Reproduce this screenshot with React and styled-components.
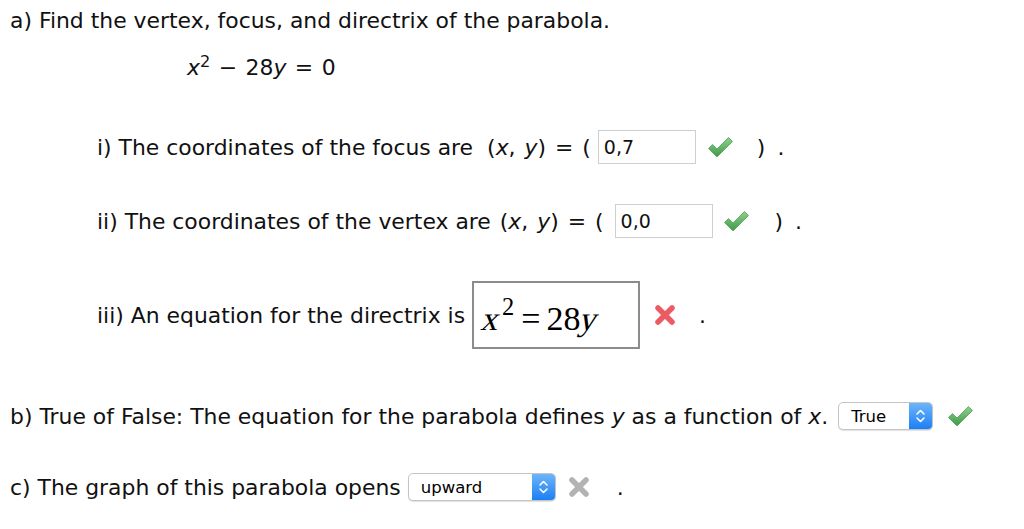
import styled, { createGlobalStyle } from 'styled-components';

const GlobalStyle = createGlobalStyle`
  html, body {
    margin: 0;
    padding: 0;
    background: #ffffff;
  }
  body {
    font-family: "DejaVu Sans", Verdana, sans-serif;
    color: #111111;
  }
`

const Page = styled.div`
  display: flex;
  flex-direction: column;
  padding-left: 10px;
  width: 1014px;
  height: 529px;
  font-size: 21.9px;
`

const Row = styled.div`
  display: flex;
  align-items: center;
  height: ${p => p.h}px;
  margin-top: ${p => p.top}px;
  padding-left: ${p => p.indent || 0}px;
  white-space: pre;
`

const Text = styled.span`
  margin-left: ${p => p.gap || 0}px;
`

const Coord = styled.span`
  margin-left: ${p => p.gap || 0}px;
  word-spacing: 2px;
`

const Equation = styled.span`
  word-spacing: 1.5px;
`

const Var = styled.i`
  font-style: italic;
`

const Sup = styled.sup`
  font-size: 0.74em;
  vertical-align: 0.5em;
  line-height: 0;
`

const AnswerInput = styled.div`
  display: flex;
  align-items: center;
  box-sizing: border-box;
  width: 98px;
  height: 34px;
  margin-left: ${p => p.gap}px;
  padding-left: 5px;
  border: 1px solid #cfcfcf;
  background: #fff;
  font-size: 19px;
`

const MathBox = styled.div`
  display: flex;
  align-items: center;
  box-sizing: border-box;
  width: 168px;
  height: 68px;
  margin-left: 7px;
  padding: 8px 0 0 9px;
  border: 2px solid #8c8c8c;
  font-family: "Liberation Serif", "Times New Roman", serif;
  font-size: 34px;
  color: #000;
`

const MathLine = styled.span`
  display: inline-block;
  line-height: 1;
`

const MathVar = styled.span`
  display: inline-block;
  font-style: normal;
  transform: skewX(-15deg);
`

const MathSup = styled.sup`
  font-size: 0.72em;
  vertical-align: 0.6em;
  line-height: 0;
  margin-left: 2px;
`

const MathOp = styled.span`
  margin: 0 6px 0 7px;
`

const Select = styled.div`
  display: flex;
  align-items: stretch;
  box-sizing: border-box;
  width: ${p => p.w}px;
  height: 28px;
  margin-left: ${p => p.gap}px;
  border: 1px solid #c4c4c4;
  border-radius: 5px;
  overflow: hidden;
  background: #fff;
  box-shadow: 0 1px 1px rgba(0, 0, 0, 0.12);
  font-size: 16.5px;
  color: #000;
`

const SelectLabel = styled.span`
  flex: 1;
  display: flex;
  align-items: center;
  padding-left: 12px;
`

const SelectButton = styled.span`
  display: flex;
  align-items: center;
  justify-content: center;
  width: 23px;
  background: linear-gradient(#6db5fb, #1b7ff5);
`

const Mark = styled.span`
  display: flex;
  align-items: center;
  margin-left: ${p => p.gap}px;
`

function Check() {
  return (
    <svg width="27" height="22" viewBox="0 0 27 22">
      <defs>
        <linearGradient id="chk" x1="0" y1="0" x2="0" y2="1">
          <stop offset="0" stopColor="#8fd08d" />
          <stop offset="1" stopColor="#3f9a48" />
        </linearGradient>
      </defs>
      <path
        d="M1.5 12.5 L5.5 8.5 L10 13 L21.5 1.5 L25.5 5.5 L10.5 20.5 Q10 21 9.5 20.5 Z"
        fill="url(#chk)"
        stroke="#4c9f52"
        strokeWidth="0.8"
        strokeLinejoin="round"
      />
    </svg>
  );
}

function Cross({ color, blur }) {
  return (
    <svg width="24" height="24" viewBox="0 0 24 24" style={blur ? { filter: 'blur(0.6px)' } : undefined}>
      <path
        d="M5 5 L19 19 M19 5 L5 19"
        stroke={color}
        strokeWidth="5.5"
        strokeLinecap="round"
      />
    </svg>
  );
}

function Updown() {
  return (
    <svg width="11" height="18" viewBox="0 0 11 18">
      <path d="M2 7 L5.5 3.5 L9 7 M2 11 L5.5 14.5 L9 11" fill="none" stroke="#fff" strokeWidth="1.6" strokeLinecap="round" strokeLinejoin="round" />
    </svg>
  );
}

export default function App() {
  return (
    <>
      <GlobalStyle />
      <Page>
        <Row h={40} top={0}>
          <Text>a) Find the vertex, focus, and directrix of the parabola.</Text>
        </Row>

        <Row h={30} top={12} indent={177}>
          <Equation><Var>x</Var><Sup>2</Sup> − 28<Var>y</Var> = 0</Equation>
        </Row>

        <Row h={34} top={48} indent={87}>
          <Text>i) The coordinates of the focus are</Text>
          <Coord gap={14}>(<Var>x</Var>, <Var>y</Var>) = (</Coord>
          <AnswerInput gap={7}>0,7</AnswerInput>
          <Mark gap={11}><Check /></Mark>
          <Text gap={23}>)</Text>
          <Text gap={12}>.</Text>
        </Row>

        <Row h={34} top={40} indent={87}>
          <Text>ii) The coordinates of the vertex are</Text>
          <Coord gap={9}>(<Var>x</Var>, <Var>y</Var>) = (</Coord>
          <AnswerInput gap={11}>0,0</AnswerInput>
          <Mark gap={10}><Check /></Mark>
          <Text gap={25}>)</Text>
          <Text gap={12}>.</Text>
        </Row>

        <Row h={68} top={43} indent={87}>
          <Text>iii) An equation for the directrix is</Text>
          <MathBox>
            <MathLine><MathVar>x</MathVar><MathSup>2</MathSup><MathOp>=</MathOp>28<MathVar>y</MathVar></MathLine>
          </MathBox>
          <Mark gap={13}><Cross color="#ec5b63" /></Mark>
          <Text gap={22}>.</Text>
        </Row>

        <Row h={28} top={53}>
          <Text>b) True of False: The equation for the parabola defines <Var>y</Var> as a function of <Var>x</Var>.</Text>
          <Select w={95} gap={10}>
            <SelectLabel>True</SelectLabel>
            <SelectButton><Updown /></SelectButton>
          </Select>
          <Mark gap={14}><Check /></Mark>
        </Row>

        <Row h={28} top={43}>
          <Text>c) The graph of this parabola opens</Text>
          <Select w={148} gap={7}>
            <SelectLabel>upward</SelectLabel>
            <SelectButton><Updown /></SelectButton>
          </Select>
          <Mark gap={11}><Cross color="#b3b3b3" blur /></Mark>
          <Text gap={26}>.</Text>
        </Row>
      </Page>
    </>
  );
}
